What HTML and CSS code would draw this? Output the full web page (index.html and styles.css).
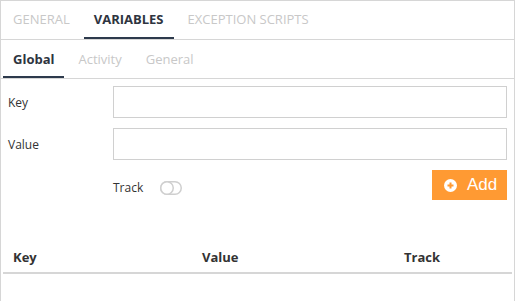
FILE: index.html
```html
<!DOCTYPE html>
<html lang="en">
<head>
    <meta charset="UTF-8">
    <title>Variables</title>
    <link rel="stylesheet" href="styles.css">
</head>
<body>
    <div class="panel">
        <div class="tabs">
            <div class="tab">GENERAL</div>
            <div class="tab active">VARIABLES</div>
            <div class="tab">EXCEPTION SCRIPTS</div>
        </div>

        <div class="tabs sub">
            <div class="tab active">Global</div>
            <div class="tab">Activity</div>
            <div class="tab">General</div>
        </div>

        <div class="form">
            <div class="row">
                <label>Key</label>
                <input type="text">
            </div>
            <div class="row">
                <label>Value</label>
                <input type="text">
            </div>
            <div class="row actions">
                <div class="track">
                    <span>Track</span>
                    <svg class="toggle" width="22" height="14" viewBox="0 0 22 14">
                        <rect x="0.75" y="0.75" width="20.5" height="12.5" rx="6.25" fill="none" stroke="#cfcfcf" stroke-width="1.5"/>
                        <circle cx="7" cy="7" r="6.25" fill="#fff" stroke="#cfcfcf" stroke-width="1.5"/>
                    </svg>
                </div>
                <button class="add">
                    <svg width="13" height="13" viewBox="0 0 13 13">
                        <circle cx="6.5" cy="6.5" r="6.5" fill="#fff"/>
                        <path d="M6.5 3.5v6M3.5 6.5h6" stroke="#ff9a33" stroke-width="2"/>
                    </svg>
                    Add
                </button>
            </div>
        </div>

        <div class="table">
            <div class="thead">
                <div>Key</div>
                <div>Value</div>
                <div>Track</div>
            </div>
        </div>
    </div>
</body>
</html>
```

FILE: styles.css
```css
body {
    margin: 0;
    font-family: "Open Sans", Arial, sans-serif;
    background: #fff;
    color: #333;
}

.panel {
    height: 301px;
    box-sizing: border-box;
    border: 1px solid #d6d6d6;
    border-bottom: none;
}

.tabs {
    display: flex;
    gap: 4px;
    padding-left: 2px;
    height: 38px;
    border-bottom: 1px solid #d6d6d6;
}

.tab {
    padding: 0 10px;
    display: flex;
    align-items: center;
    font-size: 13px;
    color: #c8c8c8;
    border-bottom: 2px solid transparent;
    box-sizing: border-box;
}

.tab.active {
    color: #2e3440;
    font-weight: bold;
    border-bottom-color: #2d3a4c;
}

.sub .tab {
    padding-top: 2px;
}

.form {
    padding: 7px 7px 0 7px;
}

.row {
    display: flex;
    align-items: center;
    margin-bottom: 10px;
}

.row label {
    width: 105px;
    font-size: 12px;
    color: #333;
}

.row input {
    flex: 1;
    height: 32px;
    box-sizing: border-box;
    border: 1px solid #d0d0d0;
    border-radius: 0;
    font-size: 13px;
    padding: 0 8px;
}

.actions {
    padding-left: 105px;
    align-items: flex-start;
}

.track {
    display: flex;
    align-items: center;
    gap: 17px;
    font-size: 12px;
    margin-top: 9px;
}

.toggle {
    display: block;
}

.add {
    margin-left: auto;
    width: 75px;
    height: 30px;
    border: none;
    background-color: #ff9a33;
    color: #fff;
    font-family: "Liberation Sans", Arial, sans-serif;
    font-size: 17px;
    display: flex;
    align-items: center;
    justify-content: center;
    gap: 10px;
    padding: 0 0 0 2px;
}

.add svg {
    display: block;
}

.table {
    margin: 41px 2px 0 2px;
}

.thead {
    display: grid;
    grid-template-columns: 189px 202px 1fr;
    height: 33px;
    box-sizing: border-box;
    align-items: center;
    border-bottom: 2px solid #d6d6d6;
    font-size: 13px;
    font-weight: bold;
    color: #333;
}

.thead div {
    padding-left: 10px;
}
```
